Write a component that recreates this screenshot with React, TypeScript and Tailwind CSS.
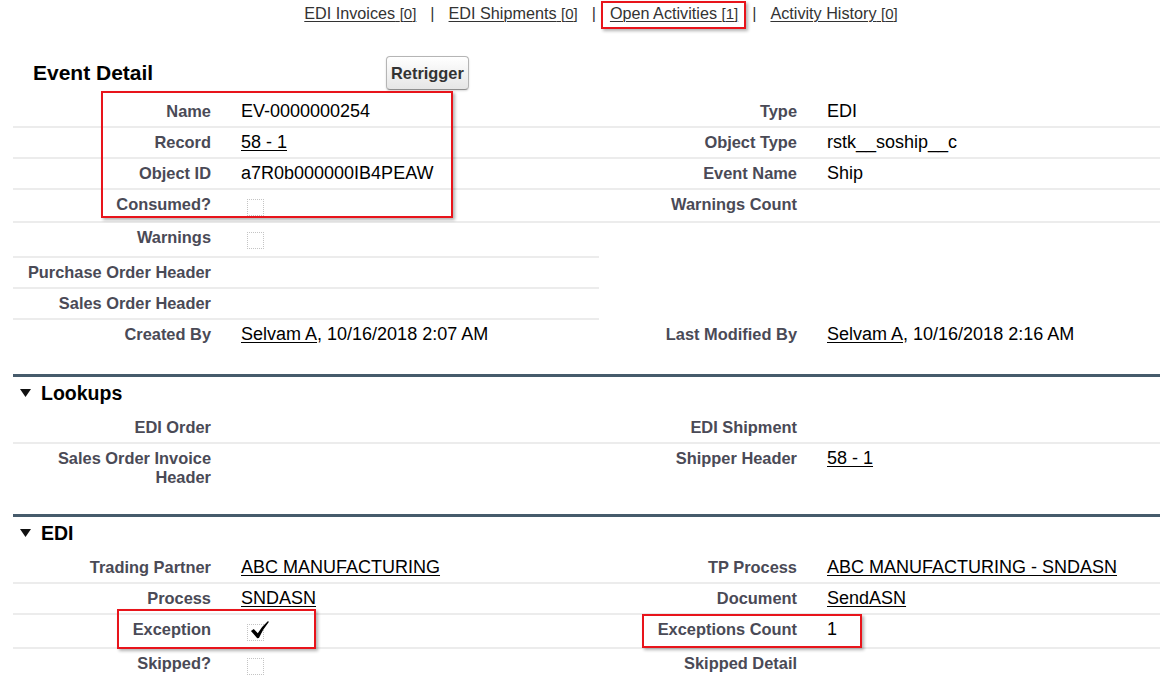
import React from "react";

type Field = { label: string; value?: React.ReactNode };

const Link: React.FC<{ children: React.ReactNode }> = ({ children }) => (
  <span className="underline underline-offset-[2px] decoration-1">{children}</span>
);

const Checkbox: React.FC<{ checked?: boolean }> = ({ checked }) => (
  <span className="relative mt-[5px] ml-[6px] block h-[17px] w-[17px] border border-dotted border-[#c4c4c4]">
    {checked && (
      <svg viewBox="0 0 20 20" className="absolute left-[2px] top-[-5px] h-[19px] w-[19px]">
        <path d="M1 11.5 L4 9.6 L8.2 14 Q12.5 6.5 19 1 L19.8 2 Q13.5 9.5 9.4 19 L7.6 19.2 Z" fill="#000" />
      </svg>
    )}
  </span>
);

function Cell({ field, line }: { field?: Field; line?: boolean }) {
  return (
    <div className={`flex w-[586px] shrink-0 ${field && line ? "border-b-2 border-[#ececec]" : ""}`}>
      {field && (
        <>
          <div className="w-[210px] shrink-0 pr-[12px] pt-[5px] text-right text-[16.4px] font-bold leading-[19px] text-[#4a4a56]">
            {field.label}
          </div>
          <div className="flex-1 pl-[18px] pt-[4px] text-[18px] leading-[20px] text-black">{field.value}</div>
        </>
      )}
    </div>
  );
}

function Row({ left, right, h, line = true }: { left?: Field; right?: Field; h: string; line?: boolean }) {
  return (
    <div className={`flex ${h}`}>
      <Cell field={left} line={line} />
      <Cell field={right} line={line} />
    </div>
  );
}

function SectionHeader({ title }: { title: string }) {
  return (
    <div className="flex h-[39px] items-start gap-[10px] border-t-[3px] border-[#465b6b] pt-[6px] pl-[7px]">
      <svg viewBox="0 0 11 8" className="mt-[6px] h-[8px] w-[11px]">
        <path d="M0 0 H11 L5.5 8 Z" fill="#111" />
      </svg>
      <span className="text-[19.5px] font-bold leading-[20px] text-black">{title}</span>
    </div>
  );
}

const tabs = [
  { name: "EDI Invoices", count: 0 },
  { name: "EDI Shipments", count: 0 },
  { name: "Open Activities", count: 1 },
  { name: "Activity History", count: 0 },
];

export default function App() {
  return (
    <div className="relative h-[680px] w-[1160px] overflow-hidden bg-white font-['Liberation_Sans',Arial,sans-serif]">
      <div className="w-[1198px]">
        {/* related list links */}
        <div className="flex h-[28px] justify-center pt-[3px] pl-[4px] text-[16.2px] leading-[20px] text-[#333]">
          {tabs.map((t, i) => (
            <React.Fragment key={t.name}>
              {i > 0 && <span className="px-[14px]">|</span>}
              <span className="underline underline-offset-[2px] decoration-1">
                {t.name} <span className="text-[15px]">[{t.count}]</span>
              </span>
            </React.Fragment>
          ))}
        </div>

        <div className="ml-[13px] w-[1172px]">
          <div className="mt-[28px] flex h-[34px] items-center">
            <h2 className="w-[373px] shrink-0 pl-[20px] text-[21px] font-bold leading-[24px] text-black">Event Detail</h2>
            <button className="h-[34px] rounded-[4px] border border-[#b5b5b5] border-b-[#8f8f8f] bg-gradient-to-b from-white to-[#e6e6e6] px-[4px] text-[16.4px] font-bold text-[#333] shadow-[0_1px_2px_rgba(0,0,0,0.15)]">
              Retrigger
            </button>
          </div>

          <div className="mt-[7px]">
            <Row h="h-[31px]" left={{ label: "Name", value: "EV-0000000254" }} right={{ label: "Type", value: "EDI" }} />
            <Row
              h="h-[31px]"
              left={{ label: "Record", value: <Link>58 - 1</Link> }}
              right={{ label: "Object Type", value: "rstk__soship__c" }}
            />
            <Row
              h="h-[31px]"
              left={{ label: "Object ID", value: "a7R0b000000IB4PEAW" }}
              right={{ label: "Event Name", value: "Ship" }}
            />
            <Row h="h-[33px]" left={{ label: "Consumed?", value: <Checkbox /> }} right={{ label: "Warnings Count" }} />
            <Row h="h-[35px]" left={{ label: "Warnings", value: <Checkbox /> }} />
            <Row h="h-[31px]" left={{ label: "Purchase Order Header" }} />
            <Row h="h-[31px]" left={{ label: "Sales Order Header" }} />
            <Row
              h="h-[31px]"
              line={false}
              left={{
                label: "Created By",
                value: (
                  <>
                    <Link>Selvam A</Link>, 10/16/2018 2:07 AM
                  </>
                ),
              }}
              right={{
                label: "Last Modified By",
                value: (
                  <>
                    <Link>Selvam A</Link>, 10/16/2018 2:16 AM
                  </>
                ),
              }}
            />
          </div>

          <div className="mt-[23px]">
            <SectionHeader title="Lookups" />
            <Row h="h-[31px]" left={{ label: "EDI Order" }} right={{ label: "EDI Shipment" }} />
            <Row
              h="h-[47px]"
              line={false}
              left={{ label: "Sales Order Invoice Header" }}
              right={{ label: "Shipper Header", value: <Link>58 - 1</Link> }}
            />
          </div>

          <div className="mt-[23px]">
            <SectionHeader title="EDI" />
            <Row
              h="h-[31px]"
              left={{ label: "Trading Partner", value: <Link>ABC MANUFACTURING</Link> }}
              right={{ label: "TP Process", value: <Link>ABC MANUFACTURING - SNDASN</Link> }}
            />
            <Row
              h="h-[31px]"
              left={{ label: "Process", value: <Link>SNDASN</Link> }}
              right={{ label: "Document", value: <Link>SendASN</Link> }}
            />
            <Row
              h="h-[34px]"
              left={{ label: "Exception", value: <Checkbox checked /> }}
              right={{ label: "Exceptions Count", value: "1" }}
            />
            <Row h="h-[31px]" line={false} left={{ label: "Skipped?", value: <Checkbox /> }} right={{ label: "Skipped Detail" }} />
          </div>
        </div>
      </div>

      {/* annotation boxes */}
      <div className="absolute left-[601px] top-[1px] h-[28px] w-[145px] border-2 border-[#e8141b] shadow-[2px_2px_3px_rgba(0,0,0,0.3)]" />
      <div className="absolute left-[101px] top-[91px] h-[127px] w-[352px] border-2 border-[#e8141b] shadow-[2px_2px_3px_rgba(0,0,0,0.3)]" />
      <div className="absolute left-[117px] top-[609px] h-[40px] w-[199px] border-2 border-[#e8141b] shadow-[2px_2px_3px_rgba(0,0,0,0.3)]" />
      <div className="absolute left-[642px] top-[614px] h-[34px] w-[220px] border-2 border-[#e8141b] shadow-[2px_2px_3px_rgba(0,0,0,0.3)]" />
    </div>
  );
}
